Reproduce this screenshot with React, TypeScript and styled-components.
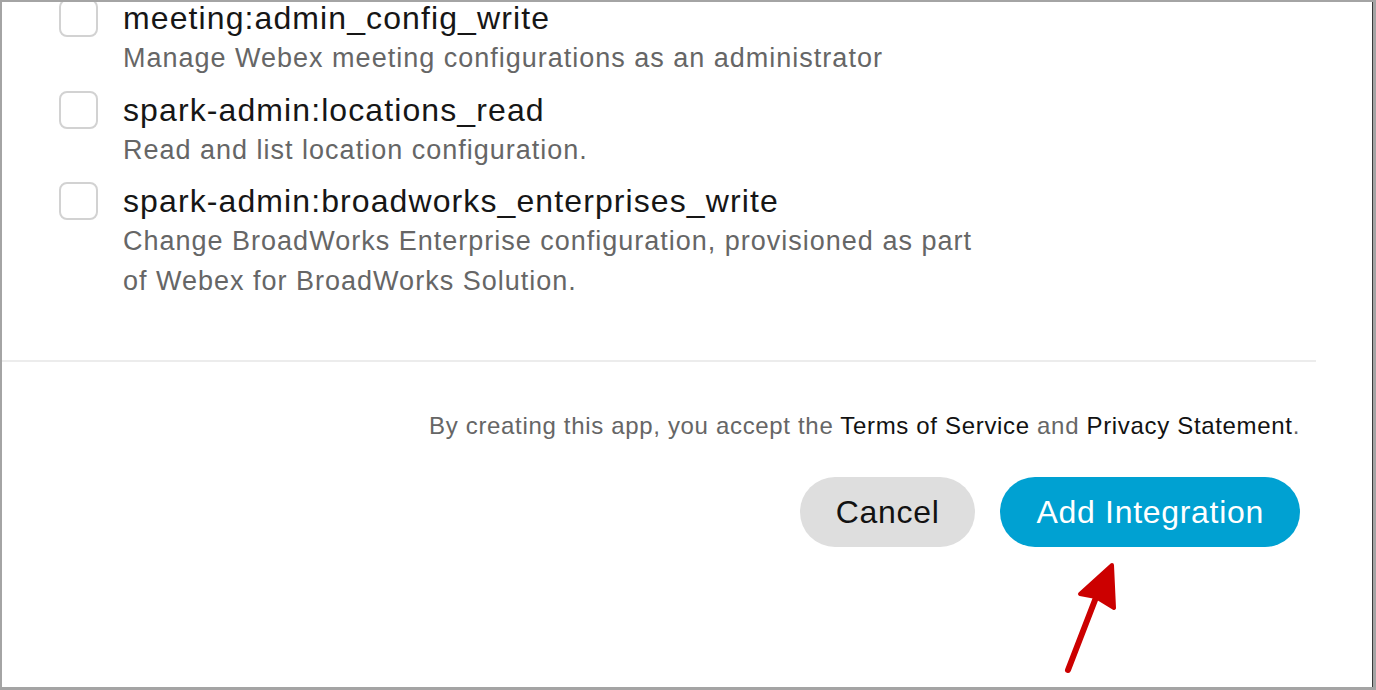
import styled, { createGlobalStyle } from 'styled-components';

const GlobalStyle = createGlobalStyle`
  html, body {
    margin: 0;
    padding: 0;
    background: #ffffff;
  }
  body {
    font-family: 'Liberation Sans', Arial, sans-serif;
    -webkit-font-smoothing: antialiased;
  }
`;

const scopes = [
  {
    name: 'meeting:admin_config_write',
    description: ['Manage Webex meeting configurations as an administrator'],
  },
  {
    name: 'spark-admin:locations_read',
    description: ['Read and list location configuration.'],
  },
  {
    name: 'spark-admin:broadworks_enterprises_write',
    description: [
      'Change BroadWorks Enterprise configuration, provisioned as part',
      'of Webex for BroadWorks Solution.',
    ],
  },
];

export default function App() {
  return (
    <>
      <GlobalStyle />
      <Frame>
        <Panel>
          <ScopeList>
            {scopes.map((scope) => (
              <ScopeRow key={scope.name}>
                <Checkbox type='button' aria-label={scope.name} />
                <ScopeText>
                  <ScopeName>{scope.name}</ScopeName>
                  {scope.description.map((line) => (
                    <ScopeDescription key={line}>{line}</ScopeDescription>
                  ))}
                </ScopeText>
              </ScopeRow>
            ))}
          </ScopeList>

          <Footer>
            <Terms>
              By creating this app, you accept the <TermsLink>Terms of Service</TermsLink> and{' '}
              <TermsLink>Privacy Statement</TermsLink>.
            </Terms>
            <Actions>
              <Button $variant='secondary'>Cancel</Button>
              <Button $variant='primary'>Add Integration</Button>
            </Actions>
          </Footer>
        </Panel>

        {/* annotation arrow pointing at the primary button */}
        <Arrow width='60' height='120' viewBox='0 0 60 120' aria-hidden='true'>
          <line x1='8' y1='114' x2='42' y2='26' stroke='#cc0000' strokeWidth='6' strokeLinecap='round' />
          <path d='M52 9 L20 38 L36 41 L54 52 Z' fill='#cc0000' stroke='#cc0000' strokeWidth='4' strokeLinejoin='round' />
        </Arrow>
      </Frame>
    </>
  );
}

const Frame = styled.div`
  position: relative;
  height: 690px;
  box-sizing: border-box;
  border-top: 2px solid #a4a4a4;
  border-left: 2px solid #a4a4a4;
  border-right: 3px solid #a4a4a4;
  border-bottom: 3px solid #a4a4a4;
  box-shadow: inset -1px 0 0 #3a3a3a;
  overflow: hidden;
`;

const Panel = styled.div`
  width: 1314px;
`;

const ScopeList = styled.div`
  display: flex;
  flex-direction: column;
  gap: 11px;
  margin-top: -4px;
  padding-left: 57px;
  padding-bottom: 59px;
  border-bottom: 2px solid #ececec;
`;

const ScopeRow = styled.div`
  display: flex;
  align-items: flex-start;
  gap: 25px;
`;

const Checkbox = styled.button`
  flex: none;
  width: 39px;
  height: 38px;
  margin-top: 1px;
  padding: 0;
  box-sizing: border-box;
  border: 2px solid #d2d2d2;
  border-radius: 8px;
  background: #ffffff;
`;

const ScopeText = styled.div`
  display: flex;
  flex-direction: column;
`;

const ScopeName = styled.div`
  font-size: 32px;
  line-height: 41px;
  letter-spacing: 1.1px;
  color: #161616;
`;

const ScopeDescription = styled.div`
  font-size: 27px;
  line-height: 39.5px;
  letter-spacing: 1px;
  color: #666666;
`;

const Footer = styled.div`
  display: flex;
  flex-direction: column;
  align-items: flex-end;
  padding: 49px 16px 0 0;
`;

const Terms = styled.p`
  margin: 0;
  font-size: 24px;
  line-height: 30px;
  letter-spacing: 0.67px;
  color: #666666;
`;

const TermsLink = styled.span`
  color: #121212;
`;

const Actions = styled.div`
  display: flex;
  gap: 25px;
  margin-top: 36px;
`;

const Button = styled.button<{ $variant: 'primary' | 'secondary' }>`
  height: 70px;
  padding: 0 36px;
  border: none;
  border-radius: 35px;
  font-family: 'Liberation Sans', Arial, sans-serif;
  font-size: 32px;
  letter-spacing: 0.7px;
  background: ${(p) => (p.$variant === 'primary' ? '#00a1d2' : '#dedede')};
  color: ${(p) => (p.$variant === 'primary' ? '#ffffff' : '#121212')};
`;

const Arrow = styled.svg`
  position: absolute;
  left: 1058px;
  top: 554px;
`;
